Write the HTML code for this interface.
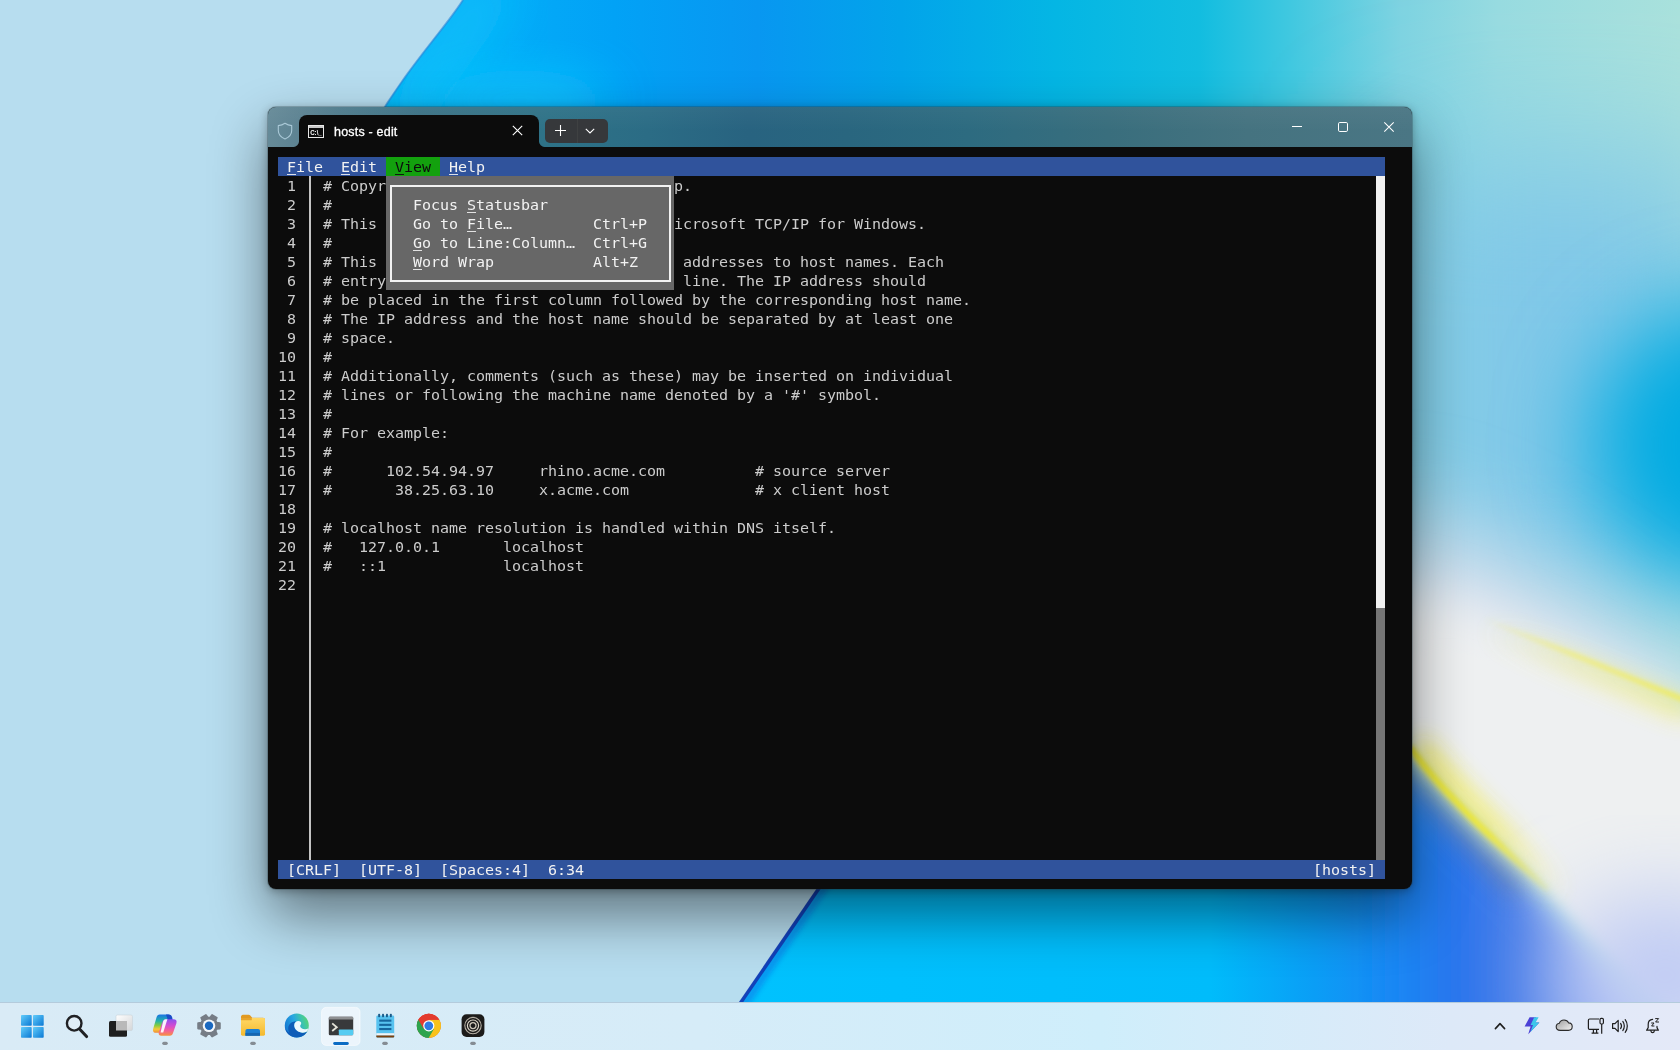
<!DOCTYPE html>
<html lang="en">
<head>
<meta charset="utf-8">
<title>hosts - edit</title>
<style>
html,body{margin:0;padding:0;}
body{width:1680px;height:1050px;overflow:hidden;position:relative;background:#b7ddef;font-family:"Liberation Sans",sans-serif;}
#wall{position:absolute;left:0;top:0;width:1680px;height:1050px;display:block;}
/* window */
#win{position:absolute;left:268px;top:107px;width:1144px;height:782px;border-radius:8px;background:#0c0c0c;
 box-shadow:0 0 0 1px rgba(40,60,70,.28),0 26px 56px rgba(0,0,0,.48),0 2px 10px rgba(0,0,0,.30);overflow:hidden;}
#tbar{position:absolute;left:0;top:0;width:1144px;height:40px;
 background:linear-gradient(180deg,rgba(255,255,255,.04),rgba(255,255,255,0) 60%),linear-gradient(90deg,#668a98 0,#5d8392 30px,#4f7b8c 70px,#3c7285 150px,#2e7287 280px,#2b6c85 380px,#286380 480px,#29667f 580px,#2d6b80 700px,#396e7d 840px,#457380 980px,#4a7684 1144px);}
#tab{position:absolute;left:31px;top:8px;width:240px;height:33px;background:#0c0c0c;border-radius:8px 8px 0 0;}
#tab:before,#tab:after{content:"";position:absolute;bottom:1px;width:6px;height:6px;}
#tab:before{left:-6px;background:radial-gradient(circle at 0 0,rgba(12,12,12,0) 5.5px,#0c0c0c 6.5px);}
#tab:after{right:-6px;background:radial-gradient(circle at 100% 0,rgba(12,12,12,0) 5.5px,#0c0c0c 6.5px);}
#ttl{position:absolute;left:66px;top:18px;color:#fff;font-size:12.5px;line-height:14px;letter-spacing:.2px;white-space:nowrap;-webkit-text-stroke:.3px #fff;opacity:.999;}
#newtab{position:absolute;left:277px;top:12px;width:63px;height:24px;border-radius:5px;background:#36383b;}
#newtab i{position:absolute;left:31.5px;top:0;width:1px;height:24px;background:#3f4142;}
.ico{position:absolute;display:block;overflow:visible;}
/* terminal */
#term{position:absolute;left:10px;top:50px;width:1107px;height:722px;}
.bar{position:absolute;left:0;width:1107px;height:19px;background:#30539c;}
pre{margin:0;position:absolute;font-family:"DejaVu Sans Mono","Liberation Mono",monospace;font-size:15px;line-height:19px;letter-spacing:-0.031px;color:#cccccc;white-space:pre;opacity:.999;}
pre span{display:block;height:19px;transform:translateY(2.8px) scaleY(.89);transform-origin:0 0;}
pre u{text-decoration:underline;text-decoration-thickness:1px;text-underline-offset:2px;}
#menu{left:0;top:0;color:#f2f2f2;}
#menu b{font-weight:normal;color:#0c0c0c;}
#vh{position:absolute;left:108px;top:0;width:54px;height:19px;background:#13a10e;}
#lines{left:0;top:19px;}
#gut{position:absolute;left:31px;top:19px;width:2px;height:684px;background:#c4c4c4;}
#sb{position:absolute;left:1098px;top:19px;width:9px;height:684px;background:#767676;}
#sb i{position:absolute;left:0;top:0;width:9px;height:432px;background:#f2f2f2;}
#status{left:0;top:703px;color:#f2f2f2;}
#drop{position:absolute;left:108px;top:19px;width:288px;height:114px;background:#676767;}
#drop .bx{position:absolute;left:4px;top:9px;width:277px;height:93px;border:2px solid #f2f2f2;}
#drop pre{left:0;top:0;color:#f2f2f2;}
/* taskbar */
#task{position:absolute;left:0;top:1002px;width:1680px;height:48px;background:linear-gradient(90deg,#d9ebf6 0,#d6ecf8 700px,#cfeefb 1100px,#dde9f8 1450px,#e4e9f8 1680px);border-top:1px solid #b4cbdc;box-sizing:border-box;}
</style>
</head>
<body>
<svg id="wall" viewBox="0 0 1680 1050" width="1680" height="1050">
<defs>
 <clipPath id="bloom">
  <path d="M463,0 C444,30 408,66 372,128 L372,200 L1400,200 L1400,870 L830.3,870 L700.2,1060 L1690,1060 L1690,0 Z"/>
 </clipPath>
 <filter id="b70" x="-50%" y="-50%" width="200%" height="200%"><feGaussianBlur stdDeviation="70"/></filter>
 <filter id="b45" x="-50%" y="-50%" width="200%" height="200%"><feGaussianBlur stdDeviation="45"/></filter>
 <filter id="b25" x="-50%" y="-50%" width="200%" height="200%"><feGaussianBlur stdDeviation="25"/></filter>
 <filter id="b12" x="-50%" y="-50%" width="200%" height="200%"><feGaussianBlur stdDeviation="12"/></filter>
 <filter id="b7" x="-50%" y="-50%" width="200%" height="200%"><feGaussianBlur stdDeviation="7"/></filter>
 <filter id="b2" x="-50%" y="-50%" width="200%" height="200%"><feGaussianBlur stdDeviation="2.4"/></filter>
 <linearGradient id="gtop" gradientUnits="userSpaceOnUse" x1="380" y1="0" x2="1680" y2="0">
  <stop offset="0" stop-color="#08baf8"/><stop offset=".09" stop-color="#04acf8"/><stop offset=".18" stop-color="#02a2f6"/><stop offset=".29" stop-color="#0897f1"/>
  <stop offset=".40" stop-color="#02a4ea"/><stop offset=".52" stop-color="#04b6e4"/><stop offset=".63" stop-color="#12bde0"/><stop offset=".70" stop-color="#40c8e0"/>
  <stop offset=".785" stop-color="#7ed3e1"/><stop offset=".86" stop-color="#98dbe0"/><stop offset="1" stop-color="#aae1dc"/>
 </linearGradient>
 <linearGradient id="gbot" gradientUnits="userSpaceOnUse" x1="740" y1="0" x2="1680" y2="0">
  <stop offset="0" stop-color="#00c2fe"/><stop offset=".50" stop-color="#00bcfb"/><stop offset=".61" stop-color="#0a9ef6"/>
  <stop offset=".702" stop-color="#1a86f4"/><stop offset=".765" stop-color="#2a74ec"/><stop offset=".828" stop-color="#4a7ee8"/>
  <stop offset=".89" stop-color="#7a9cec"/><stop offset=".953" stop-color="#a8bcf4"/><stop offset="1" stop-color="#b8c8f6"/>
 </linearGradient>
 <linearGradient id="ys1" gradientUnits="userSpaceOnUse" x1="1485" y1="0" x2="1680" y2="0">
  <stop offset="0" stop-color="#f4ee60" stop-opacity="0"/><stop offset=".45" stop-color="#f4ee60" stop-opacity=".75"/><stop offset="1" stop-color="#f3ec48" stop-opacity="1"/>
 </linearGradient>
 <linearGradient id="ys2" gradientUnits="userSpaceOnUse" x1="1408" y1="745" x2="1560" y2="905">
  <stop offset="0" stop-color="#f2ea1c" stop-opacity="1"/><stop offset=".55" stop-color="#f2ea30" stop-opacity=".95"/><stop offset="1" stop-color="#f4ee60" stop-opacity="0"/>
 </linearGradient>
</defs>
<rect width="1680" height="1050" fill="#b7ddef"/>
<g clip-path="url(#bloom)">
 <rect x="300" y="-20" width="1400" height="1100" fill="url(#gtop)"/>
 <path d="M500,-20 C470,25 440,60 405,125" fill="none" stroke="#0cc0fa" stroke-width="46" filter="url(#b25)" opacity=".95"/>
 <ellipse cx="520" cy="100" rx="90" ry="30" fill="#08c2fc" filter="url(#b25)" opacity=".85"/>
 <!-- right column -->
 <rect x="1400" y="160" width="330" height="470" fill="#80c8e8" filter="url(#b70)"/>
 <ellipse cx="1740" cy="445" rx="150" ry="145" fill="#00abe2" filter="url(#b45)"/>
 <!-- pale zone above petal -->
 <path d="M1380,505 C1480,525 1600,610 1700,690 L1700,760 L1380,760 Z" fill="#d8e0ee" filter="url(#b45)"/>
 <!-- bottom band -->
 <rect x="600" y="860" width="820" height="200" fill="url(#gbot)"/>
 <path d="M1380,1060 L1380,752 L1412,752 C1450,800 1500,845 1545,895 C1580,940 1620,985 1660,1020 L1700,1060 Z" fill="url(#gbot)" filter="url(#b12)"/>
 <!-- shadow under lower edge -->
 <path d="M1402,762 C1436,808 1480,850 1520,890" fill="none" stroke="#46608e" stroke-width="18" filter="url(#b12)" opacity=".6"/>
 <!-- white petal -->
 <path d="M1380,585 C1460,590 1580,655 1700,708 L1700,1030 C1630,975 1580,925 1545,885 C1500,838 1450,795 1412,748 L1380,720 Z" fill="#eef0f1" filter="url(#b25)"/>
 <path d="M1400,660 C1480,640 1600,680 1700,722 L1700,1030 C1630,975 1580,925 1545,885 C1500,838 1450,795 1412,748 Z" fill="#eef0f1" filter="url(#b7)"/>
 <ellipse cx="1665" cy="975" rx="110" ry="80" fill="#bfcbf4" filter="url(#b45)"/>
 <!-- yellow streaks -->
 <path d="M1465,622 C1540,648 1610,680 1690,712" fill="none" stroke="url(#ys1)" stroke-width="14" filter="url(#b12)" opacity=".8"/>
 <path d="M1480,618 C1545,642 1615,672 1690,702" fill="none" stroke="url(#ys1)" stroke-width="4" filter="url(#b2)"/>
 <path d="M1418,744 C1455,792 1505,836 1558,894" fill="none" stroke="url(#ys2)" stroke-width="16" filter="url(#b12)" opacity=".85"/>
 <path d="M1410,747 C1440,790 1492,838 1548,890" fill="none" stroke="url(#ys2)" stroke-width="6" filter="url(#b2)"/>
</g>
<path d="M836,870 L706,1060" stroke="#0a78e6" stroke-width="9" fill="none" opacity=".55" filter="url(#b2)" clip-path="url(#bloom)"/>
<path d="M831.5,870 L701.4,1060" stroke="#1238b4" stroke-width="3.6" fill="none" opacity=".92"/>
<path d="M463,0 C444,30 408,66 372,128" stroke="#2a86d8" stroke-width="2" fill="none" opacity=".6"/>
</svg>

<div id="win">
 <div id="tbar"></div>
 <div id="tab"></div>
 <div id="ttl">hosts - edit</div>
 <div id="newtab"><i></i></div>
 <svg class="ico" style="left:9px;top:15px" width="16" height="18" viewBox="0 0 16 18"><path d="M8 1.2 C6 2.6 3.7 3.4 1.3 3.6 V8.6 C1.3 12.6 4 15.4 8 16.9 C12 15.4 14.7 12.6 14.7 8.6 V3.6 C12.3 3.4 10 2.6 8 1.2 Z" fill="none" stroke="#a9c8d6" stroke-width="1.1" stroke-linejoin="round"/></svg>
 <svg class="ico" style="left:40px;top:18px;opacity:.999" width="16" height="13" viewBox="0 0 16 13"><rect x=".5" y=".5" width="15" height="12" fill="#0c0c0c" stroke="#e8e8e8" stroke-width="1"/><rect x="1" y="1" width="14" height="2" fill="#c8c8c8"/><text x="2.2" y="10.4" font-family="Liberation Sans, sans-serif" font-size="7.2" font-weight="bold" fill="#fff" textLength="11.6" lengthAdjust="spacingAndGlyphs">C:\_</text></svg>
 <svg class="ico" style="left:244px;top:18px" width="11" height="11" viewBox="0 0 11 11"><path d="M.8 .8 L10.2 10.2 M10.2 .8 L.8 10.2" stroke="#fff" stroke-width="1.1" fill="none"/></svg>
 <svg class="ico" style="left:287px;top:18px" width="11" height="11" viewBox="0 0 11 11"><path d="M5.5 0 V11 M0 5.5 H11" stroke="#fff" stroke-width="1.1" fill="none"/></svg>
 <svg class="ico" style="left:317px;top:21px" width="10" height="6" viewBox="0 0 10 6"><path d="M.8 .8 L5 5 L9.2 .8" stroke="#fff" stroke-width="1.1" fill="none"/></svg>
 <svg class="ico" style="left:1024px;top:19px" width="10" height="1" viewBox="0 0 10 1"><rect width="10" height="1" fill="#fff"/></svg>
 <svg class="ico" style="left:1070px;top:15px" width="10" height="10" viewBox="0 0 10 10"><rect x=".5" y=".5" width="9" height="9" rx="1.3" fill="none" stroke="#fff" stroke-width="1"/></svg>
 <svg class="ico" style="left:1116px;top:15px" width="10" height="10" viewBox="0 0 10 10"><path d="M.3 .3 L9.7 9.7 M9.7 .3 L.3 9.7" stroke="#fff" stroke-width="1.05" fill="none"/></svg>
 <div id="term">
  <div class="bar" style="top:0"></div>
  <div class="bar" style="top:703px"></div>
<div id="vh"></div>
<pre id="menu"><span> <u>F</u>ile  <u>E</u>dit <b> <u>V</u>iew </b> <u>H</u>elp</span></pre>
<pre id="lines"><span> 1   # Copyright (c) 1993-2009 Microsoft Corp.</span><span> 2   #</span><span> 3   # This is a sample HOSTS file used by Microsoft TCP/IP for Windows.</span><span> 4   #</span><span> 5   # This file contains the mappings of IP addresses to host names. Each</span><span> 6   # entry should be kept on an individual line. The IP address should</span><span> 7   # be placed in the first column followed by the corresponding host name.</span><span> 8   # The IP address and the host name should be separated by at least one</span><span> 9   # space.</span><span>10   #</span><span>11   # Additionally, comments (such as these) may be inserted on individual</span><span>12   # lines or following the machine name denoted by a '#' symbol.</span><span>13   #</span><span>14   # For example:</span><span>15   #</span><span>16   #      102.54.94.97     rhino.acme.com          # source server</span><span>17   #       38.25.63.10     x.acme.com              # x client host</span><span>18</span><span>19   # localhost name resolution is handled within DNS itself.</span><span>20   #   127.0.0.1       localhost</span><span>21   #   ::1             localhost</span><span>22</span></pre>
  <div id="gut"></div>
  <div id="sb"><i></i></div>
<pre id="status"><span> [CRLF]  [UTF-8]  [Spaces:4]  6:34                                                                                 [hosts]</span></pre>
  <div id="drop"><div class="bx"></div>
<pre><span> </span><span>   Focus <u>S</u>tatusbar</span><span>   Go to <u>F</u>ile…         Ctrl+P</span><span>   <u>G</u>o to Line:Column…  Ctrl+G</span><span>   <u>W</u>ord Wrap           Alt+Z</span></pre>
  </div>
 </div>
</div>

<div id="task">
<svg class="ico" style="left:0;top:-2px" width="1680" height="48" viewBox="0 1001 1680 48">
<defs>
 <linearGradient id="wg" x1="0" y1="0" x2="1" y2="1"><stop offset="0" stop-color="#62cdfb"/><stop offset="1" stop-color="#0a78d4"/></linearGradient>
 <linearGradient id="fold" x1="0" y1="0" x2="0" y2="1"><stop offset="0" stop-color="#ffd866"/><stop offset="1" stop-color="#f4b92e"/></linearGradient>
 <linearGradient id="edg" x1="0" y1=".6" x2="1" y2=".25"><stop offset="0" stop-color="#1377d2"/><stop offset=".45" stop-color="#27a6e2"/><stop offset=".75" stop-color="#3fc6a8"/><stop offset="1" stop-color="#5ad46e"/></linearGradient>
 <linearGradient id="cop" x1="0" y1="0" x2="1" y2="1"><stop offset="0" stop-color="#2a8ef0"/><stop offset=".35" stop-color="#38c8c0"/><stop offset=".55" stop-color="#f2c53a"/><stop offset=".75" stop-color="#f0608a"/><stop offset="1" stop-color="#a45cf0"/></linearGradient>
 <linearGradient id="tvw" x1="0" y1="0" x2="1" y2="1"><stop offset="0" stop-color="#ffffff"/><stop offset="1" stop-color="#d4d6d8"/></linearGradient>
 <linearGradient id="cld" x1="0" y1="0" x2="1" y2="1"><stop offset="0" stop-color="#9a9a9a"/><stop offset=".5" stop-color="#c8c8c8"/><stop offset="1" stop-color="#f4f4f4"/></linearGradient>
</defs>
<!-- start -->
<g fill="url(#wg)"><rect x="21" y="1015" width="10.7" height="10.7" rx=".8"/><rect x="33" y="1015" width="10.7" height="10.7" rx=".8"/><rect x="21" y="1027" width="10.7" height="10.7" rx=".8"/><rect x="33" y="1027" width="10.7" height="10.7" rx=".8"/></g>
<!-- search -->
<circle cx="74.2" cy="1023.3" r="7.3" fill="#eaf2f8" fill-opacity=".5" stroke="#202124" stroke-width="2.4"/><path d="M79.8 1029.2 L86.6 1036.6" stroke="#202124" stroke-width="3" stroke-linecap="round"/>
<!-- task view -->
<rect x="116" y="1015" width="16.5" height="15.5" rx="1.5" fill="url(#tvw)" stroke="#c9d3da" stroke-width=".6"/><rect x="109" y="1021" width="18" height="15.8" rx="1.5" fill="#1f1f1f"/><rect x="116" y="1021" width="11" height="9.5" fill="#b9b9b9"/>
<!-- copilot -->
<g transform="translate(164.8 1025.2)">
<defs>
<linearGradient id="cpl" x1="0" y1="0" x2="0" y2="1"><stop offset="0" stop-color="#1a74e4"/><stop offset=".35" stop-color="#22b4a8"/><stop offset=".6" stop-color="#86cc3e"/><stop offset=".8" stop-color="#f6c93a"/><stop offset="1" stop-color="#f08a3a"/></linearGradient>
<linearGradient id="cpr" x1="0" y1="0" x2="0" y2="1"><stop offset="0" stop-color="#8a50f0"/><stop offset=".4" stop-color="#d44cd0"/><stop offset=".7" stop-color="#f46296"/><stop offset="1" stop-color="#f6923e"/></linearGradient>
</defs>
<path d="M-5 -10.6 H3.4 C5.6 -10.6 6.6 -9.4 6 -7.4 L2.2 5 C1.6 6.9 .4 7.6 -1.4 7.6 H-8.6 C-11.2 7.6 -12.4 6 -11.6 3.6 L-8.4 -7.4 C-7.7 -9.7 -6.8 -10.6 -5 -10.6 Z" fill="url(#cpl)"/>
<path d="M1.2 -10.6 H3.6 C5.8 -10.6 7 -9.4 7.4 -7.6 L8 -4.4 L3.4 -4.4 Z" fill="#1a4cc8"/>
<path d="M5 10.6 H-3.4 C-5.6 10.6 -6.6 9.4 -6 7.4 L-2.2 -3.4 C-1.6 -5.3 -.4 -6 1.4 -6 H8.6 C11.2 -6 12.4 -4.4 11.6 -2 L8.4 7.4 C7.7 9.7 6.8 10.6 5 10.6 Z" fill="url(#cpr)"/>
<path d="M2.6 -6 L-1.6 7.4 L-4.2 7.4 L-1.8 -3.4 C-1.2 -5.4 -.2 -6 1.4 -6 Z" fill="#ffffff" fill-opacity=".92"/>
</g>
<!-- settings -->
<g transform="translate(209 1025.8)"><path d="M7.70 -3.11 L10.87 -2.71 L10.87 2.71 L7.70 3.11 L6.54 5.11 L7.78 8.06 L3.09 10.77 L1.16 8.22 L-1.16 8.22 L-3.09 10.77 L-7.78 8.06 L-6.54 5.11 L-7.70 3.11 L-10.87 2.71 L-10.87 -2.71 L-7.70 -3.11 L-6.54 -5.11 L-7.78 -8.06 L-3.09 -10.77 L-1.16 -8.22 L1.16 -8.22 L3.09 -10.77 L7.78 -8.06 L6.54 -5.11 Z" fill="#767d86" stroke="#767d86" stroke-width="1.8" stroke-linejoin="round"/><circle r="6.3" fill="#f3f7fb"/><circle r="4.2" fill="#1a68c0"/></g>
<!-- explorer -->
<g transform="translate(0 -.7)"><path d="M241 1017.5 C241 1016.4 241.8 1015.4 242.9 1015.4 H248.6 C249.3 1015.4 249.9 1015.7 250.3 1016.2 L252.2 1018.4 H263 C264.1 1018.4 265 1019.2 265 1020.4 V1022 H241 Z" fill="#e19a22"/><rect x="241" y="1018.8" width="24" height="17.6" rx="1.4" fill="url(#fold)"/><path d="M241 1019.6 C241 1019 241.5 1018.6 242 1018.6 H250 L251.8 1018.2 V1021 H241 Z" fill="#e8a52a"/><path d="M245.4 1036.4 V1031.6 C245.4 1030.5 246.2 1029.6 247.3 1029.6 H258.1 C259.2 1029.6 260 1030.5 260 1031.6 V1036.4 Z" fill="#1b7fd4"/><rect x="245.4" y="1033.6" width="14.6" height="2.8" fill="#1566b2"/></g>
<!-- edge -->
<g transform="translate(296.8 1025.5)"><circle r="12" fill="url(#edg)"/>
<path d="M-12 .5 C-12 7 -6.6 12 0 12 C4.6 12 8.6 9.6 10.6 5.8 C9.4 6.6 7.8 7.2 6 7.2 C1.6 7.2 -2.6 4.2 -2.6 -.2 C-2.6 -2 -1.8 -3.4 -.8 -4.2 C-5.4 -4 -8.6 -.8 -8.6 3 C-8.6 4.6 -8.2 6 -7.6 7.2 C-10.2 5.4 -12 3 -12 .5 Z" fill="#0f5cb8"/>
<path d="M-2.6 -.2 C-2.6 -2.6 -.6 -4.4 1.6 -4.4 C3.4 -4.4 4.4 -3.4 4.4 -2.2 C4.4 -1 3.4 -.6 3.4 .6 C3.4 2.6 5.6 3.8 8 3.8 C9.4 3.8 10.6 3.4 11.4 2.8 C11.2 3.8 10.9 4.9 10.6 5.8 C9.4 6.6 7.8 7.2 6 7.2 C1.6 7.2 -2.6 4.2 -2.6 -.2 Z" fill="#eef7fd"/>
</g>
<!-- terminal (active) -->
<rect x="321.6" y="1007.4" width="38.4" height="38" rx="4.5" fill="#eef6fc" fill-opacity=".9" stroke="#ffffff" stroke-opacity=".7" stroke-width=".8"/>
<rect x="328.8" y="1016.8" width="24.4" height="18.4" rx="1.2" fill="#38393b"/><path d="M328.8 1018 C328.8 1017.3 329.3 1016.8 330 1016.8 H352 C352.7 1016.8 353.2 1017.3 353.2 1018 V1019.5 H328.8 Z" fill="#8f9092"/><path d="M332.2 1023.4 L336.8 1027.2 L332.2 1031" fill="none" stroke="#e4e2d8" stroke-width="1.8"/><rect x="338.8" y="1029.4" width="14.4" height="5.8" rx=".8" fill="#55ccf2"/>
<rect x="333.2" y="1042" width="15.6" height="2.9" rx="1.45" fill="#0b6cc4"/>
<!-- notepad -->
<rect x="376.3" y="1015.4" width="17.9" height="22.2" rx="1.4" fill="#57c2ef"/><rect x="376.3" y="1033.2" width="17.9" height="2.4" fill="#f2f4f5"/><path d="M376.3 1035.4 H394.2 V1036.4 C394.2 1037.1 393.7 1037.6 393 1037.6 H377.5 C376.8 1037.6 376.3 1037.1 376.3 1036.4 Z" fill="#7d400e"/>
<g fill="#16669e"><rect x="379.2" y="1019.6" width="12.2" height="2.1"/><rect x="379.2" y="1023.8" width="12.2" height="2.1"/><rect x="379.2" y="1028" width="12.2" height="2.1"/></g>
<g fill="#1a5a88"><rect x="378.2" y="1013.8" width="1.9" height="3.4" rx=".7"/><rect x="382.1" y="1013.8" width="1.9" height="3.4" rx=".7"/><rect x="386" y="1013.8" width="1.9" height="3.4" rx=".7"/><rect x="389.9" y="1013.8" width="1.9" height="3.4" rx=".7"/></g>
<!-- chrome -->
<g transform="translate(428.8 1025.8)"><circle r="12" fill="#e33b2e"/><path d="M0 0 L-10.39 -6 A12 12 0 0 0 0 12 Z" fill="#2da44e"/><path d="M0 0 L0 12 A12 12 0 0 0 10.39 -6 Z" fill="#f8c21c"/><path d="M0 0 L-10.39 -6 A12 12 0 0 1 10.39 -6 Z" fill="#e33b2e"/><path d="M0 -6 H10.39 A12 12 0 0 1 5.2 10.8 L0 6Z" fill="#f8c21c"/><path d="M-5.2 3 L-10.39 -6 A12 12 0 0 0 0 12 L5.2 3 Z" fill="#2da44e"/><path d="M-5.2 3 L-10.39 -6 A12 12 0 0 1 10.39 -6 L0 -6 Z" fill="#e33b2e"/><circle r="5.6" fill="#fff"/><circle r="4.4" fill="#2f7be4"/></g>
<!-- dark app -->
<rect x="461.6" y="1014.2" width="22.8" height="22.8" rx="5" fill="#1c1b1a"/><g fill="none" stroke="#ddd6c8" transform="translate(473 1025.6)"><circle r="8.2" stroke-width="1.1" stroke-opacity=".8"/><circle r="5.6" stroke-width="1.2"/><circle r="3" stroke-width="1.3" stroke-opacity=".9"/></g>
<!-- running indicators -->
<g fill="#858c93"><rect x="162.2" y="1041.7" width="5.6" height="3.2" rx="1.6"/><rect x="250.2" y="1041.7" width="5.6" height="3.2" rx="1.6"/><rect x="382.2" y="1041.7" width="5.6" height="3.2" rx="1.6"/><rect x="470.2" y="1041.7" width="5.6" height="3.2" rx="1.6"/></g>
<!-- tray -->
<path d="M1495.4 1028.6 L1500 1023.6 L1504.6 1028.6" fill="none" stroke="#1f1f1f" stroke-width="1.6" stroke-linecap="round" stroke-linejoin="round"/>
<path d="M1529.6 1017.2 H1536.2 L1533.4 1022.6 H1539.4 L1528.2 1034.2 L1530.6 1026.6 H1524.6 Z" fill="#4b41d6"/><path d="M1534.2 1017.2 H1538.6 L1535.6 1022.6 H1539.4 L1530.4 1032 L1533 1025 L1530.6 1025 Z" fill="#3ec6ea"/>
<path d="M1560.2 1030.4 C1557.8 1030.4 1556.2 1028.8 1556.2 1026.8 C1556.2 1024.9 1557.6 1023.4 1559.4 1023.2 C1560 1021.2 1561.9 1020 1564 1020 C1566.1 1020 1567.8 1021.1 1568.6 1022.9 C1570.6 1023 1572.2 1024.6 1572.2 1026.6 C1572.2 1028.7 1570.6 1030.4 1568.4 1030.4 Z" fill="url(#cld)" stroke="#2b2b2b" stroke-width="1.1"/>
<g fill="none" stroke="#1f1f1f" stroke-width="1.2"><path d="M1599 1029.4 H1589.6 C1588.9 1029.4 1588.4 1028.9 1588.4 1028.2 V1020.2 C1588.4 1019.5 1588.9 1019 1589.6 1019 H1599"/><path d="M1591.6 1033.2 H1598.4 M1593.4 1029.6 V1033 M1596.6 1029.6 V1033"/><rect x="1600" y="1018.4" width="3.4" height="5.6" rx="1.2"/><path d="M1601.7 1024 V1033.8"/></g>
<g fill="none" stroke="#1f1f1f" stroke-width="1.2" stroke-linecap="round" stroke-linejoin="round"><path d="M1612.6 1023.6 H1615 L1618.2 1020.4 V1031.6 L1615 1028.4 H1612.6 Z"/><path d="M1620.6 1023.4 C1621.6 1024.8 1621.6 1027.2 1620.6 1028.6"/><path d="M1622.8 1021.4 C1624.8 1024 1624.8 1028 1622.8 1030.6"/><path d="M1625.2 1019.6 C1628 1023.2 1628 1028.8 1625.2 1032.4"/></g>
<g fill="none" stroke="#1f1f1f" stroke-width="1.2" stroke-linecap="round" stroke-linejoin="round"><path d="M1652.6 1019.4 C1649.8 1019.6 1648.2 1021.8 1648.2 1024.4 V1027.6 L1646.6 1030.2 H1658.4 L1657 1027.6 V1026.4"/><path d="M1650.8 1030.6 C1651 1031.8 1651.8 1032.6 1652.6 1032.6 C1653.4 1032.6 1654.2 1031.8 1654.4 1030.6"/><path d="M1651.6 1023 H1654 L1651.6 1026 H1654" stroke-width="1"/><path d="M1655.6 1018.6 H1658.6 L1655.6 1022 H1658.6" stroke-width="1"/></g>
</svg>
</div>
</body>
</html>
